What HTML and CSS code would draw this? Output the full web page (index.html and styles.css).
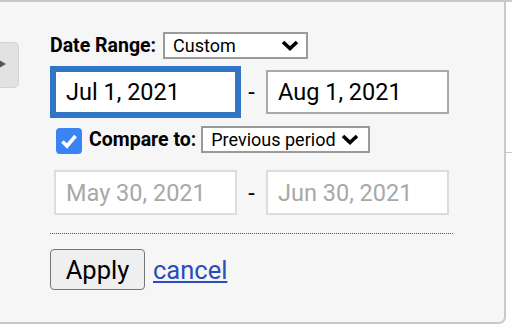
FILE: index.html
```html
<!DOCTYPE html>
<html>
<head>
<meta charset="utf-8">
<link rel="stylesheet" href="styles.css">
</head>
<body>
<div class="page">
  <div class="panel">
    <div class="tab">
      <svg class="tab-arrow" width="8" height="14" viewBox="0 0 8 14"><path d="M-4 1 L6 7 L-4 13 Z" fill="#555"/></svg>
    </div>
    <div class="content">
      <div class="row range-row">
        <span class="label">Date Range:</span>
        <div class="select select-range">
          <span>Custom</span>
          <svg class="chev" width="18" height="11" viewBox="0 0 18 11"><path d="M2 2 L9 8.5 L16 2" fill="none" stroke="#000" stroke-width="3.6" stroke-linejoin="miter"/></svg>
        </div>
      </div>
      <div class="row dates">
        <div class="field focused">Jul 1, 2021</div>
        <span class="dash">-</span>
        <div class="field">Aug 1, 2021</div>
      </div>
      <div class="row compare-row">
        <span class="check">
          <svg width="26" height="26" viewBox="0 0 26 26"><path d="M6.5 13.5 L11 18 L19.5 8" fill="none" stroke="#fff" stroke-width="3.6"/></svg>
        </span>
        <span class="label">Compare to:</span>
        <div class="select select-compare">
          <span>Previous period</span>
          <svg class="chev" width="18" height="11" viewBox="0 0 18 11"><path d="M2 2 L9 8.5 L16 2" fill="none" stroke="#000" stroke-width="3.6" stroke-linejoin="miter"/></svg>
        </div>
      </div>
      <div class="row dates dates-compare">
        <div class="field disabled">May 30, 2021</div>
        <span class="dash">-</span>
        <div class="field disabled">Jun 30, 2021</div>
      </div>
      <div class="divider"></div>
      <div class="row actions">
        <button class="apply">Apply</button>
        <a class="cancel" href="#">cancel</a>
      </div>
    </div>
  </div>
  <div class="edge"></div>
</div>
</body>
</html>
```
FILE: styles.css
```css
html, body {
  margin: 0;
  padding: 0;
  background: #ffffff;
}
body {
  font-family: Roboto, "Liberation Sans", sans-serif;
  color: #000;
}
.page {
  display: flex;
  width: 512px;
  height: 328px;
}
.panel {
  box-sizing: border-box;
  width: 506px;
  height: 324px;
  border: 2px solid #c9c9c9;
  border-left: none;
  border-radius: 0 0 7px 0;
  background: #f6f6f6;
  display: flex;
  align-items: flex-start;
}
.edge {
  flex: 1;
  height: 328px;
  background:
    linear-gradient(#c9c9c9, #c9c9c9) 0 0 / 100% 2px no-repeat,
    linear-gradient(#c9c9c9, #c9c9c9) 0 152px / 100% 1px no-repeat;
}
.tab {
  box-sizing: border-box;
  width: 19px;
  height: 46px;
  margin-top: 40px;
  background: #e2e2e2;
  border: 1px solid #d3d3d3;
  border-left: none;
  border-radius: 0 5px 5px 0;
  display: flex;
  align-items: center;
}
.tab-arrow {
  display: block;
  margin-top: -2px;
}
.content {
  margin-left: 31px;
  padding-top: 30px;
  display: flex;
  flex-direction: column;
}
.row {
  display: flex;
  align-items: center;
}
.label {
  font-weight: 700;
  font-size: 19.5px;
  white-space: nowrap;
}
.select {
  box-sizing: border-box;
  height: 27px;
  border: 2px solid #9a9a9a;
  background: #fff;
  display: flex;
  align-items: center;
  justify-content: space-between;
  font-size: 18px;
  white-space: nowrap;
}
.select-range {
  width: 145px;
  margin-left: 7px;
  padding: 0 7px 0 8px;
}
.select-compare {
  width: 169px;
  margin-left: 5px;
  padding: 0 9px 0 8px;
}
.chev {
  display: block;
  flex: none;
}
.dates {
  margin-top: 11px;
  padding-left: 4px;
}
.field {
  box-sizing: border-box;
  width: 183px;
  height: 44px;
  border: 2px solid #a9a9a9;
  background: #fff;
  font-size: 23.5px;
  padding-left: 10px;
  display: flex;
  align-items: center;
  white-space: nowrap;
}
.field.focused {
  border-color: #3275c4;
  outline: 4px solid #3275c4;
}
.field.disabled {
  border-color: #dcdcdc;
  color: #a8a8a8;
  height: 45px;
}
.dash {
  width: 29px;
  text-align: center;
  font-size: 23.5px;
}
.compare-row {
  margin-top: 12px;
  height: 27px;
}
.check {
  box-sizing: border-box;
  flex: none;
  width: 26px;
  height: 26px;
  margin-left: 6px;
  margin-right: 7px;
  margin-top: 2px;
  border-radius: 4px;
  background: #3b82f2;
  display: flex;
}
.dates-compare {
  margin-top: 17px;
}
.divider {
  width: 403px;
  margin-top: 18px;
  border-top: 1px dotted #555;
}
.actions {
  margin-top: 15px;
}
.apply {
  box-sizing: border-box;
  width: 95px;
  height: 41px;
  border: 1px solid #767676;
  border-radius: 4px;
  background: #efefef;
  font-family: Roboto, "Liberation Sans", sans-serif;
  font-size: 25.5px;
  color: #000;
  padding: 0;
}
.cancel {
  margin-left: 8px;
  font-size: 25.5px;
  color: #2a4cbf;
  text-decoration: underline;
}
```
